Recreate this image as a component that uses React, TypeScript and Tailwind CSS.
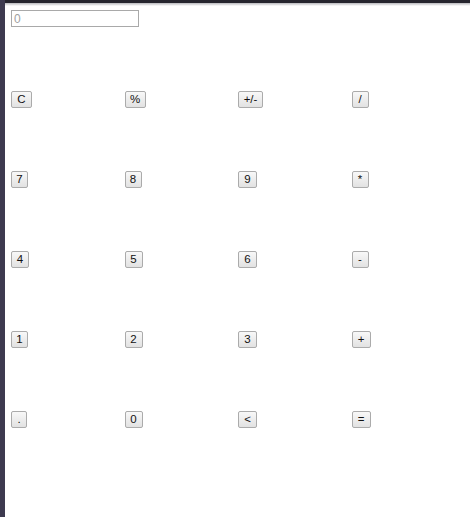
import React from "react";

const rows: [string, string][][] = [
  [["C", "w-[21px]"], ["%", "w-[21px]"], ["+/-", "w-[25px]"], ["/", "w-[17px]"]],
  [["7", "w-[17px]"], ["8", "w-[17px]"], ["9", "w-[19px]"], ["*", "w-[17px]"]],
  [["4", "w-[18px]"], ["5", "w-[18px]"], ["6", "w-[19px]"], ["-", "w-[17px]"]],
  [["1", "w-[17px]"], ["2", "w-[18px]"], ["3", "w-[19px]"], ["+", "w-[19px]"]],
  [[".", "w-[16px]"], ["0", "w-[18px]"], ["<", "w-[19px]"], ["=", "w-[19px]"]],
];

export default function App() {
  return (
    <div className="w-[470px] h-[517px] flex bg-white overflow-hidden" style={{ fontFamily: '"Liberation Sans", Arial, sans-serif' }}>
      <div className="w-[5px] h-full bg-[#3d3a4f] shrink-0" />
      <div className="flex-1 flex flex-col">
        <div className="h-[3px] bg-[#26252e]" />
        <div className="h-[3px] bg-gradient-to-b from-[#b8b8bc] to-white" />
        <div className="pl-[6px] pr-[5px] pt-[4px]">
          <input
            type="text"
            placeholder="0"
            className="block w-[128px] h-[17px] border border-[#a9a9a9] px-[2px] text-[12px] leading-[15px] text-black placeholder:text-[#a0a0a0] outline-none"
          />
          <div className="mt-[64px] flex flex-col gap-[63px]">
            {rows.map((r, i) => (
              <div key={i} className="grid grid-cols-4">
                {r.map(([k, w]) => (
                  <div key={k} className="flex items-start">
                    <button
                      className={`${w} h-[17px] p-0 flex items-center justify-center border border-[#ababab] rounded-[2px] bg-gradient-to-b from-[#f8f8f8] to-[#e2e2e2] text-[11.5px] leading-[15px] text-[#111]`}
                    >
                      {k}
                    </button>
                  </div>
                ))}
              </div>
            ))}
          </div>
        </div>
      </div>
    </div>
  );
}
